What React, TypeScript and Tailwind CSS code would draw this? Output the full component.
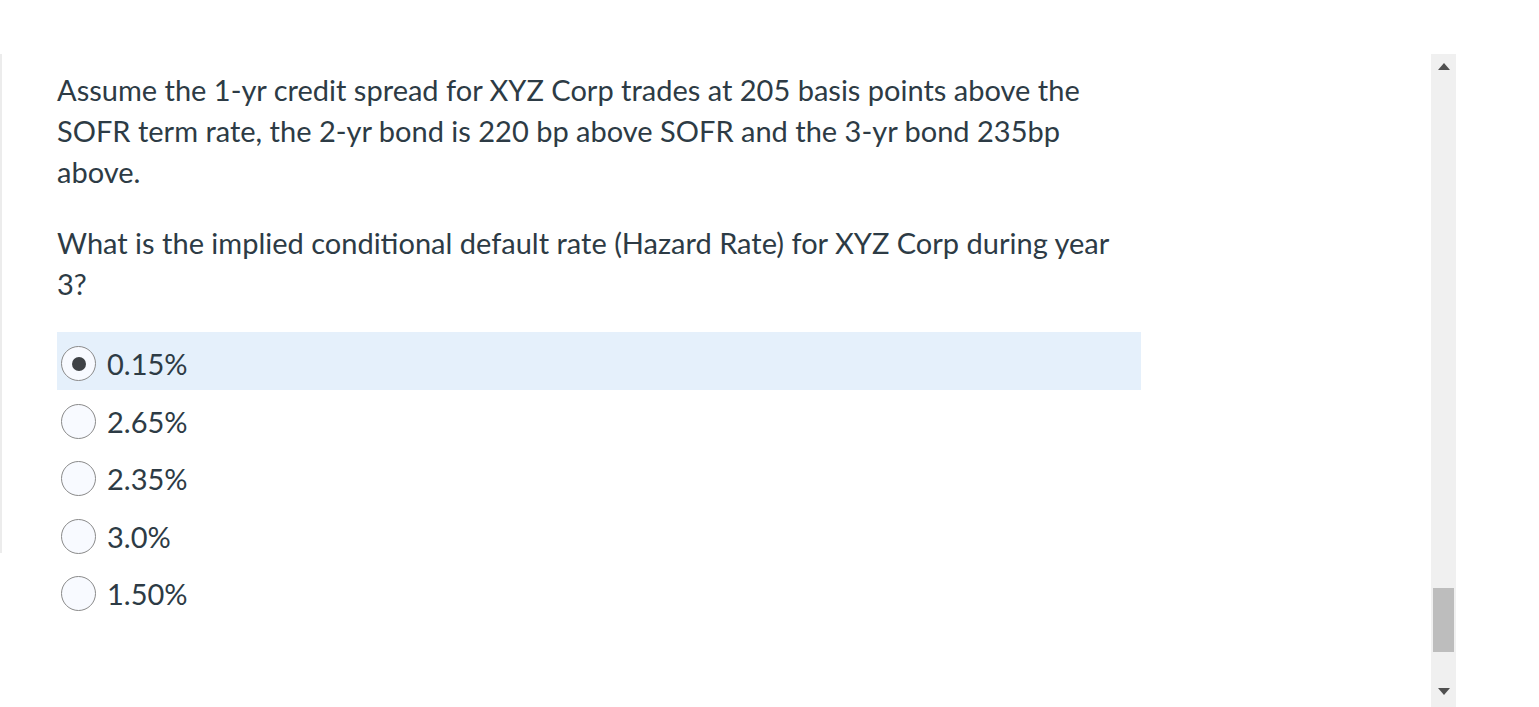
import React from "react";

const options = ["0.15%", "2.65%", "2.35%", "3.0%", "1.50%"];

export default function App() {
  const selected = 0;
  return (
    <div className="flex h-[707px] w-full overflow-hidden bg-white pt-[54px] font-['Lato','Noto_Sans',sans-serif] text-[#2d3b45]">
      <div className="h-[499px] w-[2px] shrink-0 bg-[#ececec]" />

      <div className="w-[1139px] shrink-0 pl-[55px] pt-[15px]">
        <p className="text-[29px] leading-[41px]">
          Assume the 1-yr credit spread for XYZ Corp trades at 205 basis points above the SOFR term rate, the 2-yr bond is 220 bp above SOFR and the 3-yr bond 235bp above.
        </p>
        <p className="mt-[30px] text-[29px] leading-[41px]">
          What is the implied conditional default rate (Hazard Rate) for XYZ Corp during year 3?
        </p>

        <div className="mt-[28px]">
          {options.map((opt, i) => (
            <div
              key={opt}
              className={
                i === selected
                  ? "flex h-[57.5px] items-center gap-[11px] bg-[#e5f0fb] pl-[4px]"
                  : "flex h-[57.5px] items-center gap-[11px] pl-[4px]"
              }
            >
              <span className="mt-[6px] flex h-[35px] w-[35px] items-center justify-center rounded-full border border-[#8a8a8a] bg-[#f8faff]">
                {i === selected ? <span className="h-[14px] w-[14px] rounded-full bg-[#3f4246]" /> : null}
              </span>
              <span className="mt-[6px] text-[29px] leading-[41px]">{opt}</span>
            </div>
          ))}
        </div>
      </div>

      <div className="ml-auto mr-[83px] flex h-[653px] w-[25px] shrink-0 flex-col items-center bg-[#f0f0f0]">
        <svg className="mt-[9px]" width="12" height="7" viewBox="0 0 12 7">
          <path d="M6 0 L12 7 L0 7 Z" fill="#505050" />
        </svg>
        <div className="mt-[518px] h-[64px] w-[21px] bg-[#bdbdbd]" />
        <svg className="mt-[36px]" width="12" height="7" viewBox="0 0 12 7">
          <path d="M0 0 L12 0 L6 7 Z" fill="#505050" />
        </svg>
      </div>
    </div>
  );
}
